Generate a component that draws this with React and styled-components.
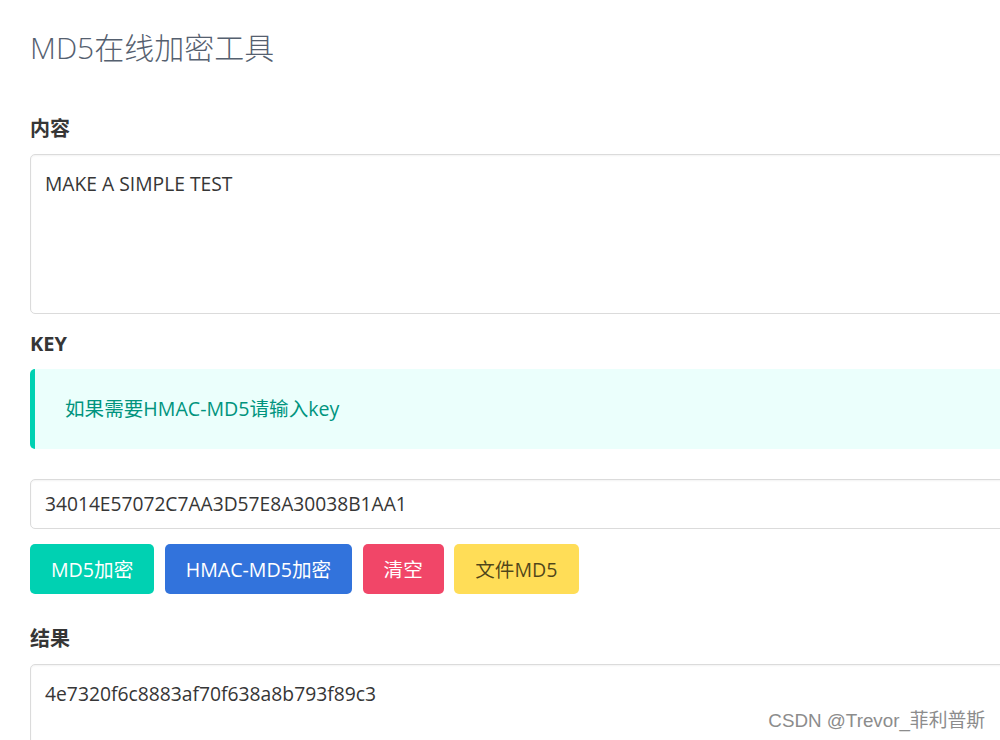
import React from "react";
import styled, { createGlobalStyle } from "styled-components";

const GlobalStyle = createGlobalStyle`
    html, body {
        margin: 0;
        padding: 0;
        background: #fff;
        overflow: hidden;
    }
    body {
        font-family: "Open Sans", "Noto Sans CJK SC", sans-serif;
        font-size: 20px;
        color: #4a4a4a;
    }
`;

const buttonColors = {
    primary: { bg: "#00d1b2", fg: "#fff" },
    link: { bg: "#3273dc", fg: "#fff" },
    danger: { bg: "#f14668", fg: "#fff" },
    warning: { bg: "#ffdd57", fg: "rgba(0, 0, 0, 0.7)" },
};

const App = () => {
    const buttons = [
        { id: 1, name: "MD5加密", kind: "primary" },
        { id: 2, name: "HMAC-MD5加密", kind: "link" },
        { id: 3, name: "清空", kind: "danger" },
        { id: 4, name: "文件MD5", kind: "warning" },
    ];
    return (
        <Page>
            <GlobalStyle />
            <Section>
                <Title>MD5在线加密工具</Title>
                <Field>
                    <Label>内容</Label>
                    <TextArea readOnly value="MAKE A SIMPLE TEST" />
                </Field>
                <Field>
                    <Label>KEY</Label>
                    <Message>如果需要HMAC-MD5请输入key</Message>
                    <Input readOnly value="34014E57072C7AA3D57E8A30038B1AA1" />
                </Field>
                <Buttons>
                    {buttons.map((b) => (
                        <Button key={b.id} kind={b.kind}>
                            {b.name}
                        </Button>
                    ))}
                </Buttons>
                <Field>
                    <Label>结果</Label>
                    <TextArea readOnly value="4e7320f6c8883af70f638a8b793f89c3" />
                </Field>
            </Section>
            <Watermark>CSDN @Trevor_菲利普斯</Watermark>
        </Page>
    );
};

export default App;

const Page = styled.div`
    position: relative;
    width: 1000px;
    height: 740px;
    overflow: hidden;
`;
const Section = styled.div`
    width: 1100px;
    padding: 31px 0 0 30px;
    box-sizing: border-box;
`;
const Title = styled.h1`
    margin: 0 0 49px;
    font-size: 30px;
    font-weight: 300;
    line-height: 1.125;
    color: #55606f;
`;
const Field = styled.div`
    display: flex;
    flex-direction: column;
    margin-bottom: 15px;
`;
const Label = styled.label`
    display: block;
    margin-bottom: 10px;
    font-size: 20px;
    font-weight: 700;
    line-height: 1.5;
    color: #363636;
`;
const TextArea = styled.textarea`
    display: block;
    box-sizing: border-box;
    width: 100%;
    height: 160px;
    resize: none;
    padding: 14px;
    border: 1px solid #dbdbdb;
    border-radius: 5px;
    box-shadow: inset 0 1px 2px rgba(10, 10, 10, 0.05);
    font-family: inherit;
    font-size: 19.3px;
    line-height: 30px;
    color: #363636;
    outline: none;
`;
const Message = styled.div`
    box-sizing: border-box;
    height: 80px;
    margin-bottom: 30px;
    padding: 25px 30px 25px 30px;
    background: #ebfffc;
    border-left: 5px solid #00d1b2;
    border-radius: 5px;
    color: #00947e;
    font-size: 19.6px;
    line-height: 30px;
`;
const Input = styled.input`
    display: block;
    box-sizing: border-box;
    width: 100%;
    height: 50px;
    padding: 0 14px;
    border: 1px solid #dbdbdb;
    border-radius: 5px;
    box-shadow: inset 0 1px 2px rgba(10, 10, 10, 0.05);
    font-family: inherit;
    font-size: 19.2px;
    color: #363636;
    outline: none;
`;
const Buttons = styled.div`
    display: flex;
    gap: 10.5px;
    margin-bottom: 30px;
`;
const Button = styled.button`
    box-sizing: border-box;
    height: 50px;
    padding: 0 20px;
    border: 1px solid transparent;
    border-radius: 5px;
    background: ${(p) => buttonColors[p.kind].bg};
    color: ${(p) => buttonColors[p.kind].fg};
    font-family: inherit;
    font-size: 19.6px;
    cursor: pointer;
`;
const Watermark = styled.div`
    position: absolute;
    right: 15px;
    bottom: 8px;
    font-family: "Liberation Sans", "Noto Sans CJK SC", sans-serif;
    font-size: 18.8px;
    color: #8c8c8c;
    text-shadow: 0 0 2px #fff;
`;
